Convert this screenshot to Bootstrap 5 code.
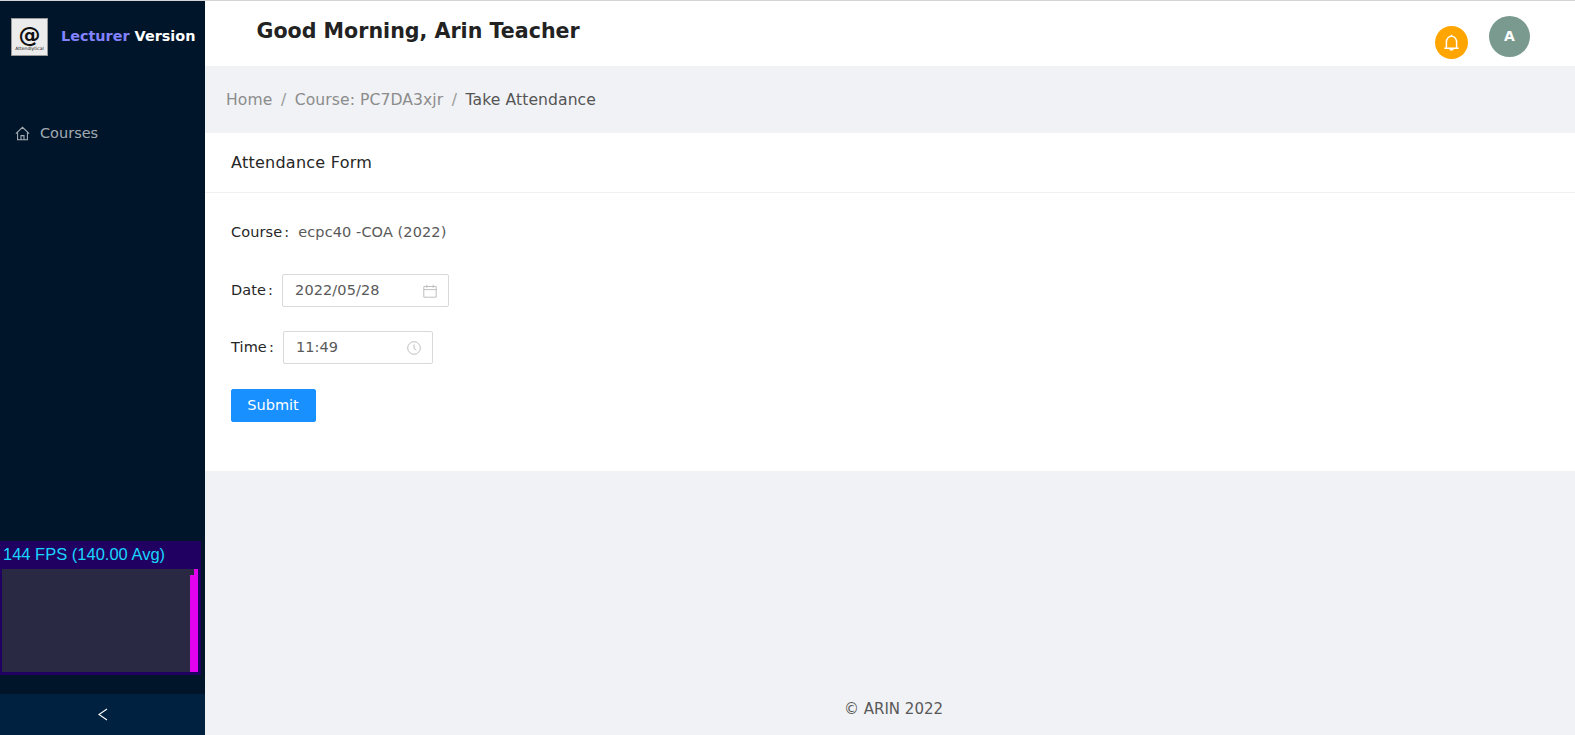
<!DOCTYPE html>
<html lang="en">
<head>
  <meta charset="UTF-8" />
  <title>Take Attendance</title>
  <link href="https://cdn.jsdelivr.net/npm/bootstrap@5.3.3/dist/css/bootstrap.min.css" rel="stylesheet">
  <style>
    html, body { height: 100%; }
    body { font-family: "DejaVu Sans", sans-serif; font-size: 14px; background: #f0f2f5; color: #262626; overflow: hidden; }
    .app-shell { height: 735px; border-top: 1px solid #d4d4d4; }
    .side-bar { width: 205px; background: #001529; flex-shrink: 0; }
    .logo-row { height: 70px; padding: 17px 0 0 11px; gap: 13px; }
    .logo-box { width: 37px; height: 38px; background: #ececec; border: 1px solid #999; color: #111; line-height: 1; }
    .logo-at { font-size: 22px; font-weight: 700; line-height: 23px; }
    .logo-name { font-size: 4.5px; line-height: 6px; }
    .brand-text { font-size: 14.4px; font-weight: 700; color: #fff; margin-top: 8px; white-space: nowrap; }
    .brand-accent { color: #8383ff; }
    .menu-link { margin-top: 50px; padding-left: 15px; gap: 10px; color: rgba(255,255,255,.65); height: 26px; font-size: 14.5px; }
    .menu-link svg { margin-top: -1px; }
    .fps-panel { margin-top: auto; width: 201px; height: 134px; background: #200060; padding: 28px 3px 3px 2px; position: relative; }
    .fps-label { position: absolute; top: 2px; left: 3px; font-family: "Liberation Sans", sans-serif; font-size: 16.5px; line-height: 22px; color: #19d6ff; white-space: nowrap; }
    .fps-graph { background: #2a2944; }
    .fps-bar { width: 4px; background: #e600f0; }
    .fps-bar-low { margin-top: 6px; }
    .collapse-bar { height: 41px; margin-top: 19px; background: #002140; color: #fff; }
    .top-head { height: 65px; background: #fff; padding: 0 45px 0 51.5px; flex-shrink: 0; }
    .greeting { font-size: 20.6px; font-weight: 700; color: #222; margin: 17px 0 0; line-height: 26px; }
    .bell-dot { width: 33px; height: 33px; background: #ffa500; margin-top: 25px; margin-right: 21px; }
    .avatar-dot { width: 41px; height: 41px; background: #7a9a8f; color: #fff; font-weight: 700; font-size: 14px; margin-top: 15px; }
    .crumb-row { height: 67px; flex-shrink: 0; padding: 2px 0 0 21px; font-size: 15.6px; letter-spacing: .08px; }
    .crumb-row .breadcrumb-item { color: #555; }
    .crumb-row .breadcrumb-item a { color: #8c8c8c; text-decoration: none; }
    .crumb-row .breadcrumb-item + .breadcrumb-item { padding-left: 8.5px; }
    .crumb-row .breadcrumb-item + .breadcrumb-item::before { color: #999; padding-right: 8.5px; }
    .form-panel { height: 338px; background: #fff; border: 0; border-radius: 0; }
    .form-panel .card-header { height: 60px; background: #fff; padding: 18px 26px 0; font-size: 16px; letter-spacing: .25px; color: #262626; border-bottom: 1px solid #f0f0f0; border-radius: 0; }
    .form-panel .card-body { padding: 0 26px; font-size: 14.5px; letter-spacing: .1px; }
    .field-row { gap: 9px; }
    .course-row { margin-top: 28px; height: 24px; }
    .date-row { margin-top: 29px; height: 33px; }
    .time-row { margin-top: 24px; height: 33px; }
    .field-label { color: #262626; white-space: nowrap; }
    .field-label::after { content: ":"; margin-left: 2px; }
    .course-value { color: #595959; }
    .picker-box { height: 33px; border: 1px solid #d9d9d9; border-radius: 2px; padding: 0 11px 0 12px; color: #595959; }
    .date-box { width: 167px; }
    .time-box { width: 150px; }
    .send-btn { margin-top: 25px; margin-left: -.5px; width: 85px; height: 33px; background: #1890ff; border-color: #1890ff; border-radius: 2px; padding: 0; font-size: 14.5px; color: #fff; }
    .foot-note { margin-top: auto; height: 52px; padding: 15px 0 0 7px; font-size: 15px; color: #595959; }
  </style>
</head>
<body>
  <div class="app-shell d-flex">
    <aside class="side-bar d-flex flex-column">
      <div class="logo-row d-flex align-items-start">
        <div class="logo-box d-flex flex-column align-items-center justify-content-center">
          <div class="logo-at">@</div>
          <div class="logo-name">Attendlytical</div>
        </div>
        <div class="brand-text"><span class="brand-accent">Lecturer</span> Version</div>
      </div>
      <div class="menu-link d-flex align-items-center">
        <svg width="15" height="15" viewBox="0 0 14 14" fill="none" stroke="currentColor" stroke-width="1"><path d="M.8 7.2 7 1.2l6.2 6M2.4 6v6.8h9.2V6M5.6 12.8V9h2.8v3.8"/></svg>
        <span>Courses</span>
      </div>
      <div class="fps-panel d-flex flex-column">
        <div class="fps-label">144 FPS (140.00 Avg)</div>
        <div class="fps-graph d-flex justify-content-end flex-grow-1">
          <div class="fps-bar fps-bar-low"></div>
          <div class="fps-bar"></div>
        </div>
      </div>
      <div class="collapse-bar d-flex align-items-center justify-content-center">
        <svg width="12" height="13" viewBox="0 0 12 13" fill="none" stroke="currentColor" stroke-width="1.1"><path d="M10 1 2 6.5 10 12"/></svg>
      </div>
    </aside>
    <main class="flex-grow-1 d-flex flex-column">
      <header class="top-head d-flex justify-content-between">
        <h1 class="greeting">Good Morning, Arin Teacher</h1>
        <div class="d-flex align-items-start">
          <div class="bell-dot rounded-circle d-flex align-items-center justify-content-center">
            <svg width="17" height="20" viewBox="0 0 16 18" fill="none" stroke="#fff" stroke-width="1.4"><path d="M8 1.2v1.4M3.2 14V8a4.8 5.4 0 0 1 9.6 0v6M1.2 14h13.6M6.3 14.2a1.8 2 0 0 0 3.4 0"/></svg>
          </div>
          <div class="avatar-dot rounded-circle d-flex align-items-center justify-content-center">A</div>
        </div>
      </header>
      <nav class="crumb-row d-flex align-items-center">
        <ol class="breadcrumb mb-0">
          <li class="breadcrumb-item"><a href="#">Home</a></li>
          <li class="breadcrumb-item"><a href="#">Course: PC7DA3xjr</a></li>
          <li class="breadcrumb-item active">Take Attendance</li>
        </ol>
      </nav>
      <section class="card form-panel">
        <div class="card-header">Attendance Form</div>
        <div class="card-body">
          <div class="field-row course-row d-flex align-items-center">
            <span class="field-label">Course</span>
            <span class="course-value">ecpc40 -COA (2022)</span>
          </div>
          <div class="field-row date-row d-flex align-items-center">
            <span class="field-label">Date</span>
            <div class="picker-box date-box d-flex align-items-center justify-content-between">
              <span>2022/05/28</span>
              <svg width="14" height="14" viewBox="0 0 14 14" fill="none" stroke="#bfbfbf" stroke-width="1"><path d="M.8 2.5h12.4v10.7H.8zM.8 5.6h12.4M3.8 .8v3M10.2 .8v3"/></svg>
            </div>
          </div>
          <div class="field-row time-row d-flex align-items-center">
            <span class="field-label">Time</span>
            <div class="picker-box time-box d-flex align-items-center justify-content-between">
              <span>11:49</span>
              <svg width="14" height="14" viewBox="0 0 14 14" fill="none" stroke="#bfbfbf" stroke-width="1"><circle cx="7" cy="7" r="6.3"/><path d="M7 3.4V7.4l2.4 1.8"/></svg>
            </div>
          </div>
          <button class="btn send-btn d-block">Submit</button>
        </div>
      </section>
      <footer class="foot-note text-center">© ARIN 2022</footer>
    </main>
  </div>
  <script src="https://cdn.jsdelivr.net/npm/bootstrap@5.3.3/dist/js/bootstrap.bundle.min.js"></script>
</body>
</html>
